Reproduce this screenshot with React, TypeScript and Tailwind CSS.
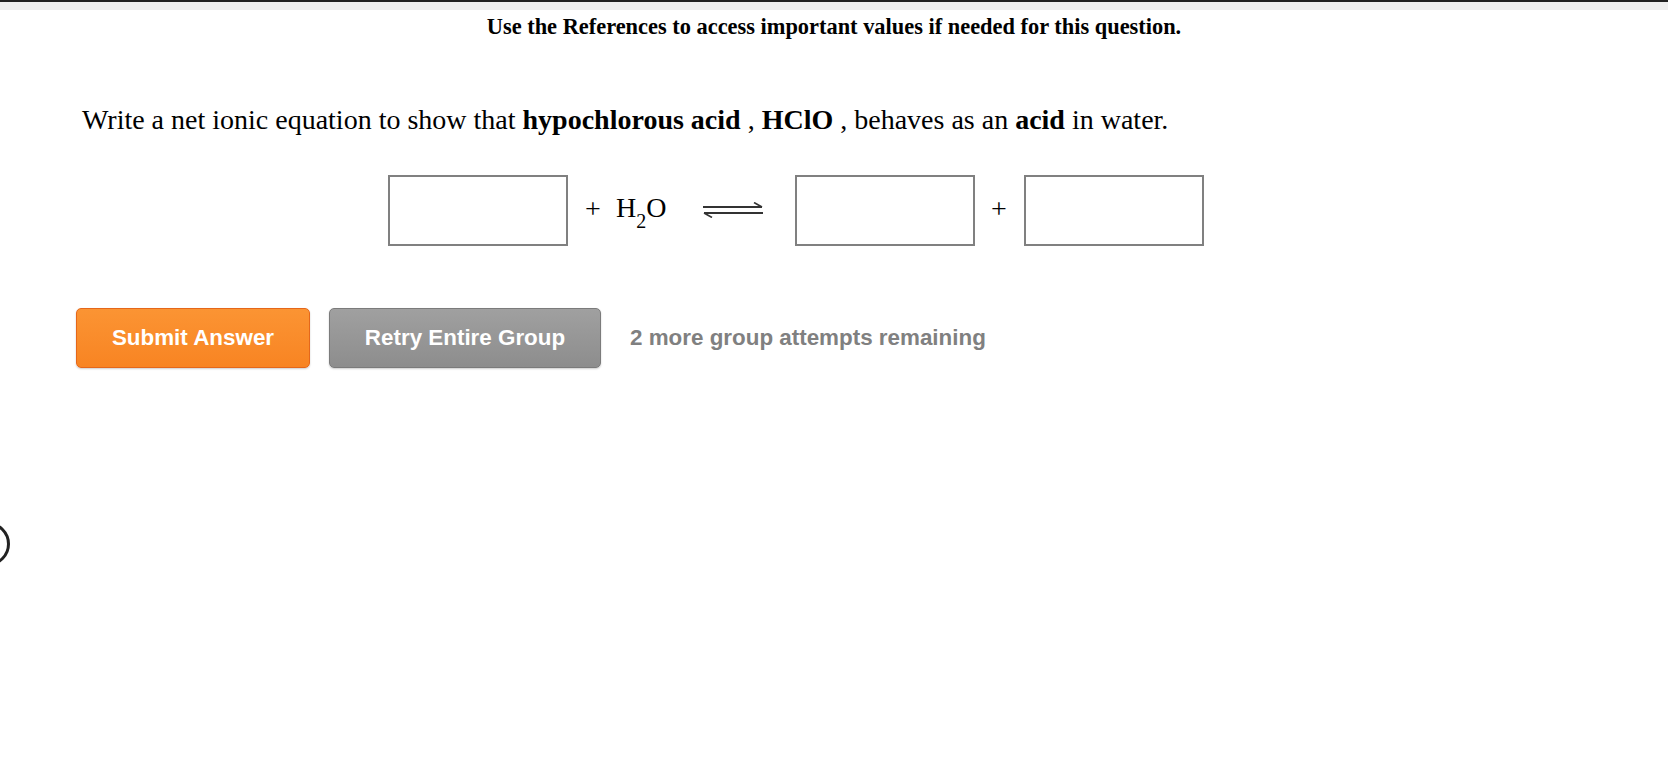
import React from 'react';

const AnswerBox: React.FC = () => (
  <div className="w-[180px] h-[71px] border-2 border-[#808080] bg-white" />
);

const EquilibriumArrow: React.FC = () => (
  <svg width="62" height="16" viewBox="0 0 62 16" className="block">
    {/* forward harpoon */}
    <line x1="1" y1="5" x2="60" y2="5" stroke="#333" strokeWidth="2" />
    <line x1="60" y1="5" x2="52" y2="0.5" stroke="#333" strokeWidth="1.6" />
    {/* reverse harpoon */}
    <line x1="2" y1="11" x2="61" y2="11" stroke="#333" strokeWidth="2" />
    <line x1="2" y1="11" x2="10" y2="15.5" stroke="#333" strokeWidth="1.6" />
  </svg>
);

export default function App() {
  return (
    <div className="relative w-[1668px] h-[776px] overflow-hidden bg-white">
      <div className="h-[2px] bg-[#222]" />
      <div className="h-[8px] bg-[#efefef]" />

      <p className="mt-[4px] text-center font-['Liberation_Serif',serif] font-bold text-[22.4px] leading-[26px] text-black">
        Use the References to access important values if needed for this question.
      </p>

      <p className="mt-[63px] ml-[82px] font-['Liberation_Serif',serif] text-[28px] leading-[34px] text-black whitespace-nowrap">
        Write a net ionic equation to show that <b>hypochlorous acid</b> , <b>HClO</b> , behaves as an <b>acid</b> in water.
      </p>

      <div className="mt-[38px] ml-[388px] flex items-center font-['Liberation_Serif',serif] text-[28px] leading-[34px] text-black">
        <AnswerBox />
        <span className="ml-[17px] mb-[4px] w-[16px]">+</span>
        <span className="ml-[15px] mb-[4px] w-[53px] whitespace-nowrap">
          H<sub className="text-[20px] align-[-6px] leading-none">2</sub>O
        </span>
        <span className="ml-[33px] mb-[2px]">
          <EquilibriumArrow />
        </span>
        <span className="ml-[31px]">
          <AnswerBox />
        </span>
        <span className="ml-[16px] mb-[4px] w-[16px]">+</span>
        <span className="ml-[17px]">
          <AnswerBox />
        </span>
      </div>

      <div className="mt-[62px] ml-[76px] flex items-center font-['Liberation_Sans',Arial,sans-serif] font-bold text-[22.4px]">
        <button className="w-[234px] h-[60px] rounded-[5px] border border-[#e5671a] bg-gradient-to-b from-[#fb9433] to-[#f88422] text-white shadow-[0_1px_2px_rgba(0,0,0,0.2)]">
          Submit Answer
        </button>
        <button className="ml-[19px] w-[272px] h-[60px] rounded-[5px] border border-[#7b7b7b] bg-gradient-to-b from-[#a0a0a0] to-[#8d8d8d] text-white shadow-[0_1px_2px_rgba(0,0,0,0.2)]">
          Retry Entire Group
        </button>
        <span className="ml-[29px] text-[#808080]">2 more group attempts remaining</span>
      </div>

      <div className="absolute left-[-34px] top-[522px] w-[44px] h-[44px] rounded-full border-[3px] border-[#222] bg-white" />
    </div>
  );
}
